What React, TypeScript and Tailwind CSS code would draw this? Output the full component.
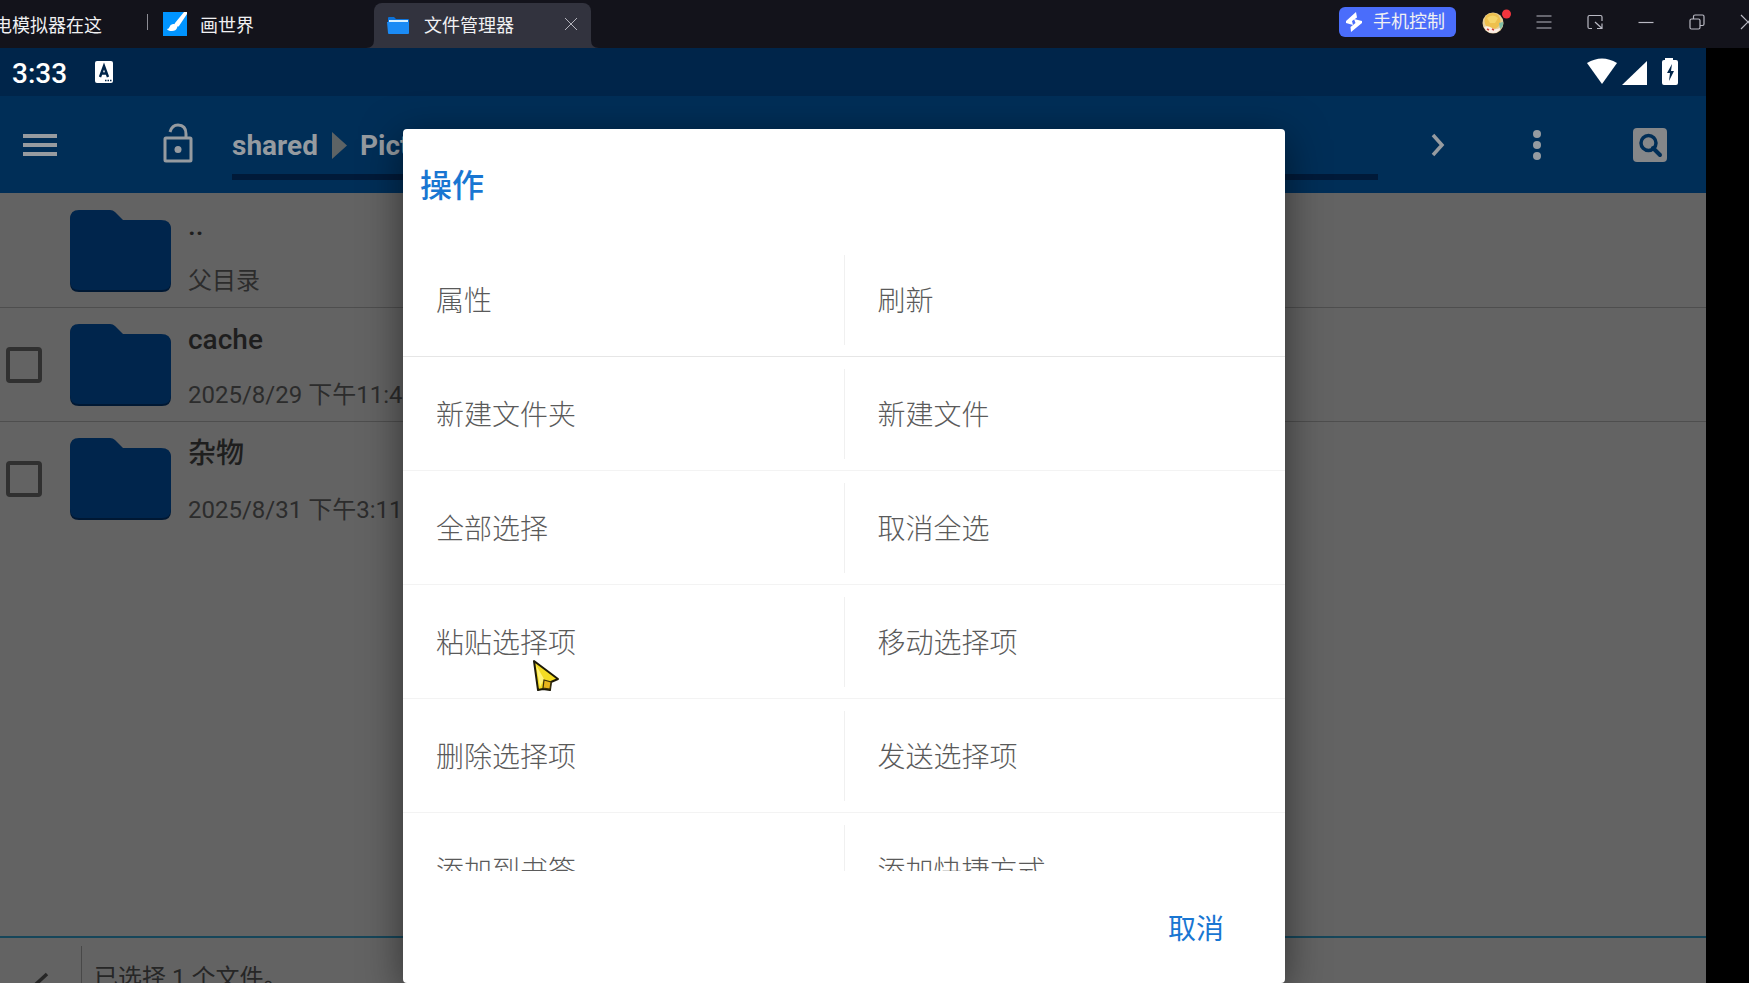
import clsx from 'clsx';

interface Entry {
    name: string;
    detail: string;
    selectable: boolean;
}

const entries: Entry[] = [
    { name: '..', detail: '父目录', selectable: false },
    { name: 'cache', detail: '2025/8/29 下午11:40', selectable: true },
    { name: '杂物', detail: '2025/8/31 下午3:11', selectable: true },
];

const actions: [string, string][] = [
    ['属性', '刷新'],
    ['新建文件夹', '新建文件'],
    ['全部选择', '取消全选'],
    ['粘贴选择项', '移动选择项'],
    ['删除选择项', '发送选择项'],
    ['添加到书签', '添加快捷方式'],
];

const FolderIcon = () => (
    <svg width="104" height="86" viewBox="0 0 104 86" className="shrink-0">
        <path d="M10 3h31q3 0 5 2l8 8h38q10 0 10 9v53q0 9-9 9H10q-9 0-9-9V12q0-9 9-9z" fill="#001833" />
        <path d="M10 2h31q3 0 5 2l8 8h38q10 0 10 9v52q0 9-9 9H10q-9 0-9-9V11q0-9 9-9z" fill="#00254c" />
    </svg>
);

const TitleBar = () => (
    <header className="flex h-12 shrink-0 items-center justify-between overflow-hidden bg-[#13131b] text-lg leading-6 text-[#f0f0f2]">
        <div className="flex h-full items-center">
            <div className="flex w-[102px] justify-end overflow-hidden pt-1">
                <span className="whitespace-nowrap">电模拟器在这</span>
            </div>
            <div className="mb-1 ml-[45px] h-4 w-px bg-[#8c8c94]" />
            <button type="button" className="ml-[15px] flex items-center gap-[13px]">
                <svg width="24" height="24" viewBox="0 0 24 24">
                    <rect width="24" height="24" fill="#0094ff" />
                    <path d="M21 0h3v2l-8 12q-1 1-2 0l-2-1q-1-1 0-2z" fill="#fff" />
                    <path d="M10 12q2-.5 4 1 1 1 0 3-1 3-5 3-4 0-5-2 2 0 2.500-2 .5-2.500 3.500-3z" fill="#fff" />
                </svg>
                <span className="pt-1">画世界</span>
            </button>
            <div className="ml-[112px] flex h-full items-end">
                <svg width="8" height="8" viewBox="0 0 8 8"><path d="M8 0v8H0q8 0 8-8z" fill="#32333e" /></svg>
                <div className="flex h-[45px] w-[217px] items-center rounded-t-lg bg-[#32333e] pl-[13px] pr-2">
                    <svg width="23" height="18" viewBox="0 0 23 18">
                        <path d="M1 1q0-1 1-1h5l2 2h12q1 0 1 1v5H1z" fill="#0d72d8" />
                        <rect x="2" y="3" width="19" height="4" fill="#d8f0ff" />
                        <path d="M0 5h22v11q0 1-1 1H2q-1 0-1-1z" fill="#1b8bf5" />
                    </svg>
                    <span className="ml-[14px]">文件管理器</span>
                    <button type="button" aria-label="关闭标签" className="mb-1 ml-auto grid size-6 place-items-center">
                        <svg width="14" height="14" viewBox="0 0 14 14" stroke="#b4b4bc" strokeWidth="1">
                            <path d="M1 1l12 12M13 1L1 13" />
                        </svg>
                    </button>
                </div>
                <svg width="8" height="8" viewBox="0 0 8 8"><path d="M0 0v8h8Q0 8 0 0z" fill="#32333e" /></svg>
            </div>
        </div>
        <div className="-mr-6 -mt-1 flex items-center">
            <button type="button" className="mr-[11px] flex h-[30px] w-[117px] items-center gap-[11px] rounded-md bg-[#4a6dfb] pl-[7px]">
                <svg width="16" height="20" viewBox="0 0 16 20" fill="#fff">
                    <path d="M10 0 0 9v2l7 2-1-4 5-3.500z" />
                    <path d="M5 20l11-9V9L8 7l1.500 4-5 4z" />
                </svg>
                手机控制
            </button>
            <button type="button" aria-label="账号" className="grid h-8 w-[51px] place-items-center">
                <svg width="36" height="26" viewBox="0 0 36 26">
                    <circle cx="18" cy="14" r="10.500" fill="#e6cf9a" />
                    <circle cx="17.500" cy="12" r="8" fill="#eec04e" />
                    <path d="M12 9q6-5 11 0l-3 5h-5z" fill="#f5d56a" />
                    <path d="M9 18q4-2 8 1t9-1q-2 6-8 6-6 0-9-6z" fill="#fbeee6" />
                    <path d="M24 14l4-1q1 4-3 7z" fill="#7fc0a8" />
                    <path d="M12 20l2 1m3-1l2 1" stroke="#d0443f" strokeWidth="1.500" />
                    <circle cx="31.500" cy="5" r="4.500" fill="#f4353d" />
                </svg>
            </button>
            <button type="button" aria-label="菜单" className="grid h-8 w-[51px] place-items-center">
                <svg width="16" height="16" viewBox="0 0 16 16" stroke="#b9b9c3" strokeWidth="1.200">
                    <path d="M.5 2h15M.5 8h15M.5 14h15" />
                </svg>
            </button>
            <button type="button" aria-label="小窗" className="grid h-8 w-[51px] place-items-center">
                <svg width="16" height="16" viewBox="0 0 16 16" fill="none" stroke="#b9b9c3" strokeWidth="1.200">
                    <path d="M5 14.500H2.500q-1.500 0-1.500-1.500V3q0-1.500 1.500-1.500h11Q15 1.500 15 3v4M8 8l6.500 6M15 9.500v5h-5" />
                </svg>
            </button>
            <button type="button" aria-label="最小化" className="grid h-8 w-[51px] place-items-center">
                <svg width="16" height="16" viewBox="0 0 16 16" stroke="#b9b9c3" strokeWidth="1.200">
                    <path d="M.5 8.500h15" />
                </svg>
            </button>
            <button type="button" aria-label="还原" className="grid h-8 w-[51px] place-items-center">
                <svg width="16" height="16" viewBox="0 0 16 16" fill="none" stroke="#b9b9c3" strokeWidth="1.200">
                    <rect x="1" y="5" width="10" height="10" rx="1.500" />
                    <path d="M4.500 5V2.500q0-1.500 1.500-1.500h7.500Q15 1 15 2.500V10q0 1.500-1.500 1.500H11" />
                </svg>
            </button>
            <button type="button" aria-label="关闭" className="grid h-8 w-[51px] place-items-center">
                <svg width="16" height="16" viewBox="0 0 16 16" stroke="#b9b9c3" strokeWidth="1.200">
                    <path d="M1 1l14 14M15 1L1 15" />
                </svg>
            </button>
        </div>
    </header>
);

const StatusBar = () => (
    <div className="flex h-12 shrink-0 items-center justify-between bg-[#00254a] pl-3 pr-7">
        <div className="flex items-center gap-[27px] text-[28px] font-medium leading-8 text-white">
            <span className="pt-1">3:33</span>
            <svg width="20" height="22" viewBox="0 0 20 22">
                <rect x="1" width="18" height="22" rx="2" fill="#fff" />
                <path d="M6 16l4-11 4 11M7.500 12.500h5" fill="none" stroke="#00254a" strokeWidth="2.400" />
                <path d="M11 19.500h7" stroke="#00254a" strokeWidth="1.500" strokeDasharray="1.500 1" />
            </svg>
        </div>
        <svg width="92" height="28" viewBox="0 0 92 28" fill="#fff">
            <path d="M1 5q15-9 30 0L16 26z" />
            <path d="M61 3v24H36z" />
            <path d="M79 0h8v2h3q2 0 2 2v21q0 2-2 2H78q-2 0-2-2V4q0-2 2-2h1z" />
            <path d="M86 6l-5 9h3l-1 8 5-10h-3z" fill="#00254a" />
        </svg>
    </div>
);

const Toolbar = () => (
    <div className="flex h-[97px] shrink-0 bg-[#002e57] text-[#969ba0]">
        <button type="button" aria-label="打开菜单" className="grid w-20 place-items-center">
            <svg width="34" height="24" viewBox="0 0 34 24" stroke="currentColor" strokeWidth="4">
                <path d="M0 3h34M0 12h34M0 21h34" />
            </svg>
        </button>
        <button type="button" aria-label="解锁" className="ml-[43px] grid w-[109px] place-items-center pb-1">
            <svg width="30" height="40" viewBox="0 0 30 40" fill="none" stroke="currentColor" strokeWidth="3">
                <rect x="2" y="15" width="26" height="23" rx="1" />
                <path d="M7 9q2-7 8-7 8 0 8 9v4" />
                <circle cx="15" cy="26.500" r="3.500" fill="currentColor" stroke="none" />
            </svg>
        </button>
        <nav className="flex min-w-0 flex-1 flex-col pt-[34px]">
            <div className="flex h-11 items-start gap-[13px] overflow-hidden text-[28px] font-bold leading-8">
                <a href="#shared">shared</a>
                <svg width="16" height="32" viewBox="0 0 16 32" className="shrink-0">
                    <path d="M1 2l15 13.500L1 29z" fill="#5d6365" />
                </svg>
                <a href="#pictures">Pictures</a>
            </div>
            <div className="h-1.5 bg-[#001a39]" />
        </nav>
        <button type="button" aria-label="前进" className="grid w-[120px] place-items-center">
            <svg width="14" height="24" viewBox="0 0 14 24" fill="none" stroke="currentColor" strokeWidth="3.500">
                <path d="M2 2l9 10-9 10" />
            </svg>
        </button>
        <button type="button" aria-label="更多" className="mr-[17px] grid w-[78px] place-items-center">
            <svg width="8" height="30" viewBox="0 0 8 30" fill="currentColor">
                <circle cx="4" cy="4" r="4" />
                <circle cx="4" cy="15" r="4" />
                <circle cx="4" cy="26" r="4" />
            </svg>
        </button>
        <button type="button" aria-label="搜索" className="grid w-[113px] place-items-center">
            <svg width="34" height="34" viewBox="0 0 34 34">
                <rect width="34" height="34" rx="4" fill="#858789" />
                <circle cx="15.500" cy="15" r="7.500" fill="none" stroke="#002e57" strokeWidth="3.500" />
                <path d="M20 20l7 7" stroke="#002e57" strokeWidth="4" strokeLinecap="round" />
            </svg>
        </button>
    </div>
);

const FileList = () => (
    <ul className="min-h-0 flex-1 overflow-hidden pt-px">
        {entries.map((entry, index) => (
            <li
                key={entry.name}
                className={clsx('flex h-[114px] items-center pl-1.5', index < entries.length - 1 && 'border-b border-[#4e4e4e]')}
            >
                <div className="w-[63px] shrink-0">
                    {entry.selectable && (
                        <input
                            type="checkbox"
                            aria-label={entry.name}
                            className="block size-9 appearance-none rounded-[4px] border-4 border-[#303030]"
                        />
                    )}
                </div>
                <FolderIcon />
                <div className="ml-[15px] flex h-full flex-col justify-between whitespace-nowrap pb-2 pt-4">
                    <p className="text-[28px] font-medium leading-8 text-[#1e1e1e]">{entry.name}</p>
                    <p className="text-2xl leading-9 text-[#2c2c2c]">{entry.detail}</p>
                </div>
            </li>
        ))}
    </ul>
);

const SelectionBar = () => (
    <div className="h-[47px] shrink-0 overflow-hidden border-t-2 border-[#16465a]">
        <div className="flex h-20 text-[#262626]">
            <button type="button" aria-label="返回" className="grid w-[81px] place-items-center">
                <svg width="16" height="28" viewBox="0 0 16 28" fill="none" stroke="currentColor" strokeWidth="3.500">
                    <path d="M14 10L2 21l12 11" />
                </svg>
            </button>
            <div className="mt-2 w-px bg-[#484848]" />
            <p className="ml-3 self-center text-2xl leading-9">已选择 1 个文件。</p>
        </div>
    </div>
);

const ActionDialog = () => (
    <div
        role="dialog"
        aria-labelledby="dialog-title"
        className="flex min-w-0 flex-1 flex-col overflow-hidden rounded-[4px] bg-white shadow-[0_10px_40px_rgba(0,0,0,0.5)]"
    >
        <h2 id="dialog-title" className="flex h-[114px] shrink-0 items-center pl-[17px] text-[32px] font-medium leading-10 text-[#1976d2]">
            操作
        </h2>
        <div className="min-h-0 flex-1 overflow-hidden">
            {actions.map(([left, right], index) => (
                <div
                    key={left}
                    className={clsx(
                        'flex h-[114px] items-center border-b text-[28px] font-light leading-10 text-[#5a5a5a]',
                        index === 0 ? 'border-[#e6e6e6]' : 'border-[#f3f3f3]'
                    )}
                >
                    <button type="button" className="h-full flex-1 pl-[33px] pt-1 text-left">{left}</button>
                    <div className="h-[90px] w-px bg-[#f0f0f0]" />
                    <button type="button" className="h-full flex-1 pl-[33px] pt-1 text-left">{right}</button>
                </div>
            ))}
        </div>
        <div className="flex h-28 shrink-0 items-center justify-end pr-[61px] pt-1.5">
            <button type="button" className="text-[28px] leading-10 text-[#1976d2]">取消</button>
        </div>
    </div>
);

const Cursor = () => (
    <svg width="28" height="34" viewBox="0 0 28 34" className="pointer-events-none absolute left-[532px] top-[659px]">
        <path d="M2 2l4 29 5-1 7 1 1-8 7-3z" fill="#f4dc24" stroke="#1d1a08" strokeWidth="2" strokeLinejoin="round" />
        <path d="M4 6l8 14-4 8z" fill="#fff27a" />
        <path d="M12 21l7 2-1 7-7-1z" fill="#e8b41c" stroke="#3a2f08" strokeWidth="1.200" />
    </svg>
);

export default function App() {
    return (
        <div className="relative flex h-screen flex-col overflow-hidden bg-black font-[Roboto,'Noto_Sans_CJK_SC',sans-serif]">
            <TitleBar />
            <main className="flex min-h-0 flex-1 pr-[43px]">
                <div className="relative flex min-w-0 flex-1 flex-col bg-[#636363]">
                    <StatusBar />
                    <Toolbar />
                    <FileList />
                    <SelectionBar />
                    <div className="absolute inset-0 flex overflow-hidden pl-[403px] pr-[421px] pt-[81px]">
                        <ActionDialog />
                    </div>
                </div>
            </main>
            <Cursor />
        </div>
    );
}
